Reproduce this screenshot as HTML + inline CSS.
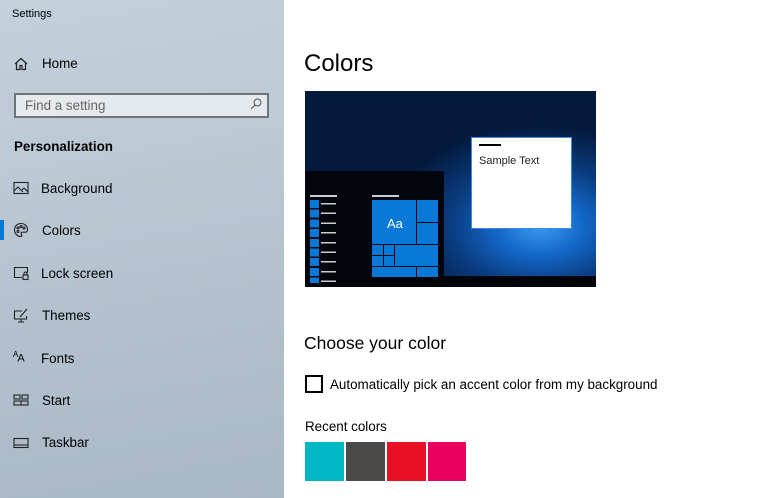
<!DOCTYPE html>
<html><head><style>
*{margin:0;padding:0;box-sizing:border-box}
body{width:768px;height:498px;overflow:hidden;font-family:"Liberation Sans",sans-serif;background:#fff;position:relative}
#side{position:absolute;left:0;top:0;width:284px;height:498px;background:linear-gradient(170deg,#c4d0db 0%,#bccad6 30%,#b3c1ce 60%,#a9b8c7 100%)}
.t{position:absolute;color:#000;font-size:13.4px}
.ic{position:absolute;left:13px;width:16px;height:16px}
</style></head><body>
<div id="side">
<div class="t" style="left:12px;top:8px;font-size:11px">Settings</div>
<svg class="ic" style="top:56px" viewBox="0 0 16 16" fill="none" stroke="#222" stroke-width="1.2"><path d="M2 8L8 2.5L14 8M3.5 7v6.5h3.5v-4h2v4h3.5V7"/></svg>
<div class="t" style="left:42px;top:56px">Home</div>
<div style="position:absolute;left:14px;top:93px;width:255px;height:25px;border:2px solid #6f747a;background:rgba(235,238,242,.85)"></div>
<div class="t" style="left:25px;top:98px;color:#666">Find a setting</div>
<svg style="position:absolute;left:250px;top:98px" width="12" height="12" viewBox="0 0 12 12" fill="none" stroke="#555" stroke-width="1"><circle cx="7.5" cy="4.5" r="3.5"/><path d="M5 7L1 11"/></svg>
<div class="t" style="left:14px;top:139px;font-weight:bold">Personalization</div>
<svg class="ic" style="top:180px" viewBox="0 0 16 16" fill="none" stroke="#222" stroke-width="1.1"><rect x="1" y="2.5" width="14" height="11"/><path d="M1 11l4-4 5 5M9 10l2-2 4 4"/></svg>
<div class="t" style="left:41px;top:181px">Background</div>
<div style="position:absolute;left:0;top:220px;width:4px;height:20px;background:#0078d7"></div>
<svg class="ic" style="top:222px" viewBox="0 0 16 16" fill="none" stroke="#222" stroke-width="1.1"><path d="M8 1.5C4 1.5 1.5 4.5 1.5 8c0 3.5 3 6.5 6 6.5 1.5 0 1.5-1.5.8-2.3-.7-.9 0-2 1.2-2H12c1.5 0 2.5-1 2.5-2.5C14.5 4 11.5 1.5 8 1.5z"/><circle cx="5" cy="6" r="1"/><circle cx="8" cy="4.5" r="1"/><circle cx="11" cy="6" r="1"/><circle cx="5" cy="9.5" r="1"/></svg>
<div class="t" style="left:42px;top:223px">Colors</div>
<svg class="ic" style="top:265px" viewBox="0 0 16 16" fill="none" stroke="#222" stroke-width="1.1"><path d="M9 12.5H1.5v-10h13v5"/><rect x="10" y="10" width="5" height="4.5"/><path d="M11 10V8.5a1.5 1.5 0 013 0V10"/></svg>
<div class="t" style="left:41px;top:266px">Lock screen</div>
<svg class="ic" style="top:307px" viewBox="0 0 16 16" fill="none" stroke="#222" stroke-width="1.1"><path d="M9 4H1.5v8h12V9M5 15h6M8 12v3"/><path d="M7 10l7-8"/></svg>
<div class="t" style="left:42px;top:308px">Themes</div>
<div class="t" style="left:13px;top:350px;font-size:11px;letter-spacing:-1px"><sup style="font-size:8px">A</sup>A</div>
<div class="t" style="left:41px;top:351px">Fonts</div>
<svg class="ic" style="top:392px" viewBox="0 0 16 16" fill="none" stroke="#222" stroke-width="1.1"><rect x="1" y="3" width="6" height="4"/><rect x="9" y="3" width="6" height="4"/><rect x="1" y="9" width="14" height="4"/><path d="M8 9v4"/></svg>
<div class="t" style="left:42px;top:393px">Start</div>
<svg class="ic" style="top:435px" viewBox="0 0 16 16" fill="none" stroke="#222" stroke-width="1.1"><rect x="1" y="3.5" width="14" height="9"/><path d="M1 10h14"/></svg>
<div class="t" style="left:42px;top:435px">Taskbar</div>
</div>

<div class="t" style="left:304px;top:50px;font-size:24px">Colors</div>
<div style="position:absolute;left:305px;top:91px;width:291px;height:196px;overflow:hidden;background:radial-gradient(ellipse 150px 100px at 235px 135px,#3a9af0 0%,#1366c6 30%,#0a3c80 60%,#041a3d 100%)">
 <div style="position:absolute;left:0;top:80px;width:139px;height:105px;background:#03070d"></div>
 <div style="position:absolute;left:0;top:185px;width:291px;height:11px;background:#02050a"></div>
 <div style="position:absolute;left:5px;top:104px;width:27px;height:2px;background:#ccc"></div>
 <div style="position:absolute;left:67px;top:104px;width:27px;height:2px;background:#ccc"></div>
 <div style="position:absolute;left:5px;top:109px;width:9px;height:83px;background:repeating-linear-gradient(#0a78d6 0 8px,#03070d 8px 9.7px)"></div>
 <div style="position:absolute;left:16px;top:112px;width:15px;height:80px;background:repeating-linear-gradient(#ccc 0 1.5px,transparent 1.5px 9.7px)"></div>
 <div style="position:absolute;left:67px;top:109px;width:66px;height:77px;background:#0a78d6"></div>
 <div style="position:absolute;left:67px;top:109px;width:66px;height:77px;background:linear-gradient(#03070d,#03070d) 44px 0/1px 45px no-repeat,linear-gradient(#03070d,#03070d) 44px 22px/22px 1px no-repeat,linear-gradient(#03070d,#03070d) 0 44px/66px 1px no-repeat,linear-gradient(#03070d,#03070d) 11px 44px/1px 22px no-repeat,linear-gradient(#03070d,#03070d) 22px 44px/1px 22px no-repeat,linear-gradient(#03070d,#03070d) 0 55px/22px 1px no-repeat,linear-gradient(#03070d,#03070d) 0 66px/66px 1px no-repeat,linear-gradient(#03070d,#03070d) 44px 66px/1px 11px no-repeat"></div>
 <div style="position:absolute;left:82px;top:125px;color:#fff;font-size:13px">Aa</div>
 <div style="position:absolute;left:166px;top:46px;width:101px;height:92px;background:#fff;border:1px solid #3a8be0"></div>
 <div style="position:absolute;left:174px;top:53px;width:22px;height:2px;background:#000"></div>
 <div style="position:absolute;left:174px;top:64px;font-size:11px;color:#222">Sample Text</div>
</div>
<div class="t" style="left:304px;top:333px;font-size:17.5px">Choose your color</div>
<div style="position:absolute;left:305px;top:375px;width:18px;height:18px;border:2px solid #000"></div>
<div class="t" style="left:330px;top:377px">Automatically pick an accent color from my background</div>
<div class="t" style="left:305px;top:419px">Recent colors</div>
<div style="position:absolute;left:305px;top:442px;width:39px;height:39px;background:#00b7c3"></div>
<div style="position:absolute;left:346px;top:442px;width:39px;height:39px;background:#4c4a48"></div>
<div style="position:absolute;left:387px;top:442px;width:39px;height:39px;background:#e81123"></div>
<div style="position:absolute;left:428px;top:442px;width:38px;height:39px;background:#ea005e"></div>
</body></html>
